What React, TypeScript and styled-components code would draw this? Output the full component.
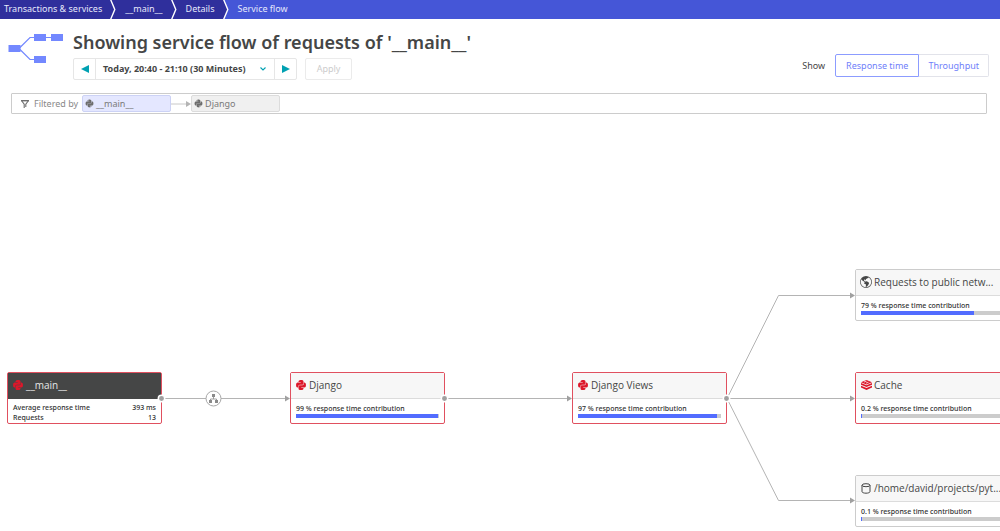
import React from 'react';
import styled, { createGlobalStyle } from 'styled-components';
import { FaPython } from 'react-icons/fa';
import { BsGlobeAmericas } from 'react-icons/bs';

const GlobalStyle = createGlobalStyle`
  *, *::before, *::after { box-sizing: border-box; }
  body {
    margin: 0;
    background: #fff;
    color: #454646;
    font: 400 9px/12px "Noto Sans", "Open Sans", sans-serif;
  }
  button { font: inherit; color: inherit; margin: 0; padding: 0; background: none; border: 0; cursor: pointer; }
  h1, h2, p, ol, dl, dd, dt { margin: 0; padding: 0; font: inherit; }
  a { color: inherit; text-decoration: none; }
  svg { display: block; flex: none; }
`;

const Page = styled.div`
  display: flex;
  flex-direction: column;
  min-height: 100vh;
`;

/* Breadcrumbs */

const Crumbs = styled.ol`
  display: flex;
  height: 19px;
  background: #4556d7;
  color: #e6e8fb;
  list-style: none;
`;

const Crumb = styled.li<{ $current?: boolean; $first?: boolean }>`
  display: flex;
  align-items: center;
  padding-left: ${(p) => (p.$first ? 4 : 9)}px;
  background: ${(p) => (p.$current ? '#4556d7' : '#2f2f9c')};
`;

const CrumbLink = styled.a`
  padding: 0 8px 1px 0;
  white-space: nowrap;
`;

function Chevron({ next }: { next: string }) {
  return (
    <svg width="6" height="19" viewBox="0 0 6 19" aria-hidden="true">
      <rect width="6" height="19" fill={next} />
      <path d="M0 0h1l4 9.5-4 9.5H0z" fill="#2f2f9c" />
      <path d="M.6-.5 4.8 9.5.6 19.5" fill="none" stroke="#fff" strokeWidth="1.4" />
    </svg>
  );
}

/* Header */

const Header = styled.header`
  display: flex;
  align-items: flex-start;
  padding: 11px 11px 0 8px;
`;

const HeaderIcon = styled.div`
  width: 65px;
  padding-top: 3px;
`;

const HeaderMain = styled.div`
  flex: 1;
`;

const Title = styled.h1`
  font-size: 18px;
  line-height: 24px;
  font-weight: 600;
`;

const Toolbar = styled.div`
  display: flex;
  gap: 8px;
  margin-top: 4px;
`;

const Group = styled.div`
  display: flex;
  height: 22px;
  border: 1px solid #e6e6e6;
  border-radius: 2px;
`;

const StepButton = styled.button`
  display: flex;
  align-items: center;
  justify-content: center;
  width: 21px;
  color: #00a1b2;
`;

const RangeButton = styled.button`
  display: flex;
  align-items: center;
  justify-content: space-between;
  width: 180px;
  padding: 0 8px 0 7px;
  border: solid #e6e6e6;
  border-width: 0 1px;
  font-weight: 700;
  white-space: nowrap;
  svg { color: #00a1b2; }
`;

const ApplyButton = styled.button`
  width: 47px;
  height: 22px;
  border: 1px solid #ebebeb;
  border-radius: 2px;
  color: #cccccc;
`;

const Show = styled.div`
  display: flex;
  align-items: center;
  gap: 10px;
  padding-top: 24px;
`;

const Segments = styled.div`
  display: flex;
`;

const Segment = styled.button<{ $active?: boolean }>`
  height: 23px;
  padding: 0 ${(p) => (p.$active ? 10 : 9)}px;
  border: 1px solid ${(p) => (p.$active ? '#8c9cff' : '#e2e3ea')};
  border-left-width: ${(p) => (p.$active ? 1 : 0)}px;
  border-radius: ${(p) => (p.$active ? '2px 0 0 2px' : '0 2px 2px 0')};
  color: #6f80fa;
`;

/* Filter */

const FilterBar = styled.div`
  display: flex;
  align-items: center;
  height: 21px;
  margin: 13px 13px 0 11px;
  padding-left: 9px;
  border: 1px solid #cccccc;
  border-radius: 1px;
  color: #898989;
`;

const FilterLabel = styled.span`
  margin: 0 4px 0 5px;
`;

const Chip = styled.button<{ $selected?: boolean }>`
  display: flex;
  align-items: center;
  gap: 2px;
  width: 89px;
  height: 17px;
  padding-left: 2px;
  border: 1px solid ${(p) => (p.$selected ? '#ccd2f5' : '#dcdcdc')};
  border-radius: 2px;
  background: ${(p) => (p.$selected ? '#e4e7ff' : '#f0f0f0')};
  color: #7a7a7a;
  svg { color: #6d6d6d; }
`;

/* Flow diagram */

const Canvas = styled.main`
  position: relative;
  flex: 1;
  min-height: 415px;
  overflow: hidden;
`;

const Edges = styled.svg`
  position: absolute;
  inset: 0;
  width: 100%;
  height: 100%;
`;

const Node = styled.section<{ $x: number; $y: number; $failing?: boolean }>`
  position: absolute;
  left: ${(p) => p.$x}px;
  top: ${(p) => p.$y}px;
  width: 155px;
  height: 52px;
  border: 1px solid ${(p) => (p.$failing ? '#e0505f' : '#cccccc')};
  border-radius: 2px;
  background: #fff;
  color: #2f2f2f;
  font-size: 7px;
  font-weight: 500;
  line-height: 10px;
`;

const NodeHead = styled.header<{ $dark?: boolean }>`
  display: flex;
  align-items: center;
  gap: 2px;
  height: 26px;
  padding: 0 4px 1px;
  border-bottom: 1px solid ${(p) => (p.$dark ? '#454646' : '#dcdcdc')};
  background: ${(p) => (p.$dark ? '#454646' : '#f7f7f7')};
  color: ${(p) => (p.$dark ? '#e6e6e6' : '#454646')};
`;

const NodeIcon = styled.span`
  display: flex;
  width: 12px;
  justify-content: center;
`;

const NodeTitle = styled.h2`
  font-family: "Open Sans", "Noto Sans", sans-serif;
  font-size: 10px;
  font-weight: 400;
  line-height: 14px;
  white-space: nowrap;
`;

const Contribution = styled.div`
  padding: 5px 5px 0;
`;

const Track = styled.div`
  height: 4px;
  background: #cccccc;
`;

const Fill = styled.div`
  height: 4px;
  background: #526cff;
`;

const Stats = styled.dl`
  padding: 4px 5px 0;
`;

const Stat = styled.div`
  display: flex;
  justify-content: space-between;
`;

type IconName = 'python' | 'globe' | 'redis' | 'database';

const icons: Record<IconName, React.ReactNode> = {
  python: (
    <svg width="10" height="10" viewBox="0 0 20 20" fill="#dc172a">
      <path d="M9 0h3q3 0 3 3v4q0 2.5-2.5 2.5H7.5Q4.5 9.5 4.5 12.5V15H3q-3 0-3-5t3-5h6.500V4H5V3q0-3 4-3z" />
      <path d="M11 20H8q-3 0-3-3v-4q0-2.5 2.5-2.500h5q3 0 3-3V5H17q3 0 3 5t-3 5h-6.500v1H15v1q0 3-4 3z" />
    </svg>
  ),
  redis: (
    <svg width="11" height="10" viewBox="0 0 22 20" fill="#dc172a">
      <path d="M11 0 22 4.5 11 9 0 4.500z" />
      <path d="m0 6 11 4.500 11-4.500v3.700L11 14.200 0 9.700z" />
      <path d="m0 11.300 11 4.500 11-4.500V15l-11 4.800L0 15z" />
      <path d="m6 4 5-1.500M10 6.200l5-1.700" stroke="#fff" strokeWidth="1.5" />
    </svg>
  ),
  globe: <BsGlobeAmericas size={12} color="#454646" />,
  database: (
    <svg width="10" height="11" viewBox="0 0 10 11" fill="none" stroke="#454646" strokeWidth="1">
      <ellipse cx="5" cy="2.2" rx="4" ry="1.5" />
      <path d="M1 2.2v6.4c0 .9 1.8 1.6 4 1.6s4-.7 4-1.6V2.2" />
    </svg>
  ),
};

type Service = {
  title: string;
  icon: IconName;
  x: number;
  y: number;
  failing?: boolean;
  share: string;
};

const services: Service[] = [
  { title: 'Django', icon: 'python', x: 290, y: 258, failing: true, share: '99' },
  { title: 'Django Views', icon: 'python', x: 572, y: 258, failing: true, share: '97' },
  { title: 'Requests to public netw...', icon: 'globe', x: 855, y: 155, share: '79' },
  { title: 'Cache', icon: 'redis', x: 855, y: 258, failing: true, share: '0.2' },
  { title: '/home/david/projects/pyt...', icon: 'database', x: 855, y: 361, share: '0.1' },
];

function ServiceNode({ title, icon, x, y, failing, share }: Service) {
  return (
    <Node $x={x} $y={y} $failing={failing}>
      <NodeHead>
        <NodeIcon>{icons[icon]}</NodeIcon>
        <NodeTitle>{title}</NodeTitle>
      </NodeHead>
      <Contribution>
        <p>{share} % response time contribution</p>
        <Track>
          <Fill style={{ width: `${share}%` }} />
        </Track>
      </Contribution>
    </Node>
  );
}

function Arrow({ x, y }: { x: number; y: number }) {
  return <path d={`M${x} ${y}l-5-3v6z`} fill="#a0a0a0" />;
}

export default function App() {
  return (
    <Page>
      <GlobalStyle />
      <nav aria-label="Breadcrumb">
        <Crumbs>
          <Crumb $first>
            <CrumbLink href="#services">Transactions &amp; services</CrumbLink>
            <Chevron next="#2f2f9c" />
          </Crumb>
          <Crumb>
            <CrumbLink href="#main">__main__</CrumbLink>
            <Chevron next="#2f2f9c" />
          </Crumb>
          <Crumb>
            <CrumbLink href="#details">Details</CrumbLink>
            <Chevron next="#4556d7" />
          </Crumb>
          <Crumb $current>
            <CrumbLink href="#flow" aria-current="page">Service flow</CrumbLink>
          </Crumb>
        </Crumbs>
      </nav>

      <Header>
        <HeaderIcon>
          <svg width="56" height="30" viewBox="0 0 56 30" fill="#7388ff" aria-hidden="true">
            <path d="M11 15.5 22 4.5h22M11 15.5l11 11h6" fill="none" stroke="#7388ff" strokeWidth="1.2" />
            <rect x=".5" y="12" width="12" height="7" />
            <rect x="26" y="1" width="12" height="7" />
            <rect x="43" y="1" width="12" height="7" />
            <rect x="26" y="23" width="12" height="7" />
          </svg>
        </HeaderIcon>
        <HeaderMain>
          <Title>Showing service flow of requests of '__main__'</Title>
          <Toolbar>
            <Group>
              <StepButton aria-label="Previous timeframe">
                <svg width="8" height="8" viewBox="0 0 8 8" fill="currentColor"><path d="M8 0v8L0 4z" /></svg>
              </StepButton>
              <RangeButton>
                Today, 20:40 - 21:10 (30 Minutes)
                <svg width="6" height="4" viewBox="0 0 6 4" fill="none" stroke="currentColor" strokeWidth="1.1"><path d="m.5.5 2.5 2.4L5.5.5" /></svg>
              </RangeButton>
              <StepButton aria-label="Next timeframe">
                <svg width="8" height="8" viewBox="0 0 8 8" fill="currentColor"><path d="M0 0v8l8-4z" /></svg>
              </StepButton>
            </Group>
            <ApplyButton>Apply</ApplyButton>
          </Toolbar>
        </HeaderMain>
        <Show>
          <span>Show</span>
          <Segments role="group" aria-label="Show">
            <Segment $active aria-pressed="true">Response time</Segment>
            <Segment aria-pressed="false">Throughput</Segment>
          </Segments>
        </Show>
      </Header>

      <FilterBar>
        <svg width="8" height="8" viewBox="0 0 8 8" fill="none" stroke="#6d6d6d" aria-hidden="true">
          <path d="M0 .7h8" strokeWidth="1.4" />
          <path d="M.8 1 3.2 4.2V8M7.2 1 4.8 4.2V7" strokeWidth="1.1" />
        </svg>
        <FilterLabel>Filtered by</FilterLabel>
        <Chip $selected>
          <FaPython size={9} />
          __main__
        </Chip>
        <svg width="20" height="6" viewBox="0 0 20 6" aria-hidden="true">
          <path d="M0 3h15" stroke="#c8c8c8" />
          <path d="M15 0l5 3-5 3z" fill="#b4b4b4" />
        </svg>
        <Chip>
          <FaPython size={9} />
          Django
        </Chip>
      </FilterBar>

      <Canvas>
        <Edges aria-hidden="true">
          <g fill="none" stroke="#b4b4b4">
            <path d="M162 284.5H286M445 284.5H568M727 284.5H851" />
            <path d="M727 284.5 778.5 181.5H851M727 284.5 778.5 386.5H851" />
          </g>
          <Arrow x={290} y={284.5} />
          <Arrow x={572} y={284.5} />
          <Arrow x={855} y={284.5} />
          <Arrow x={855} y={181.5} />
          <Arrow x={855} y={386.5} />
          <circle cx="213.5" cy="284.5" r="7.5" fill="#fff" stroke="#a8a8a8" />
          <path d="M213.5 282v3M210.5 286.5V285h6v1.5" fill="none" stroke="#8a8a8a" strokeWidth=".8" />
          <g fill="#8a8a8a">
            <rect x="212" y="280" width="3" height="3" />
            <rect x="209" y="286" width="3" height="3" />
            <rect x="215" y="286" width="3" height="3" />
          </g>
        </Edges>

        <Node $x={7} $y={258} $failing>
          <NodeHead $dark>
            <NodeIcon>{icons.python}</NodeIcon>
            <NodeTitle>__main__</NodeTitle>
          </NodeHead>
          <Stats>
            <Stat><dt>Average response time</dt><dd>393 ms</dd></Stat>
            <Stat><dt>Requests</dt><dd>13</dd></Stat>
          </Stats>
        </Node>
        {services.map((s) => (
          <ServiceNode key={s.title} {...s} />
        ))}

        <Edges aria-hidden="true" pointerEvents="none">
          <g fill="#a0a0a0" stroke="#fff" strokeWidth="1.5">
            <circle cx="161.5" cy="284.5" r="3.2" />
            <circle cx="444.5" cy="284.5" r="3.2" />
            <circle cx="726.5" cy="284.5" r="3.2" />
          </g>
        </Edges>
      </Canvas>
    </Page>
  );
}
